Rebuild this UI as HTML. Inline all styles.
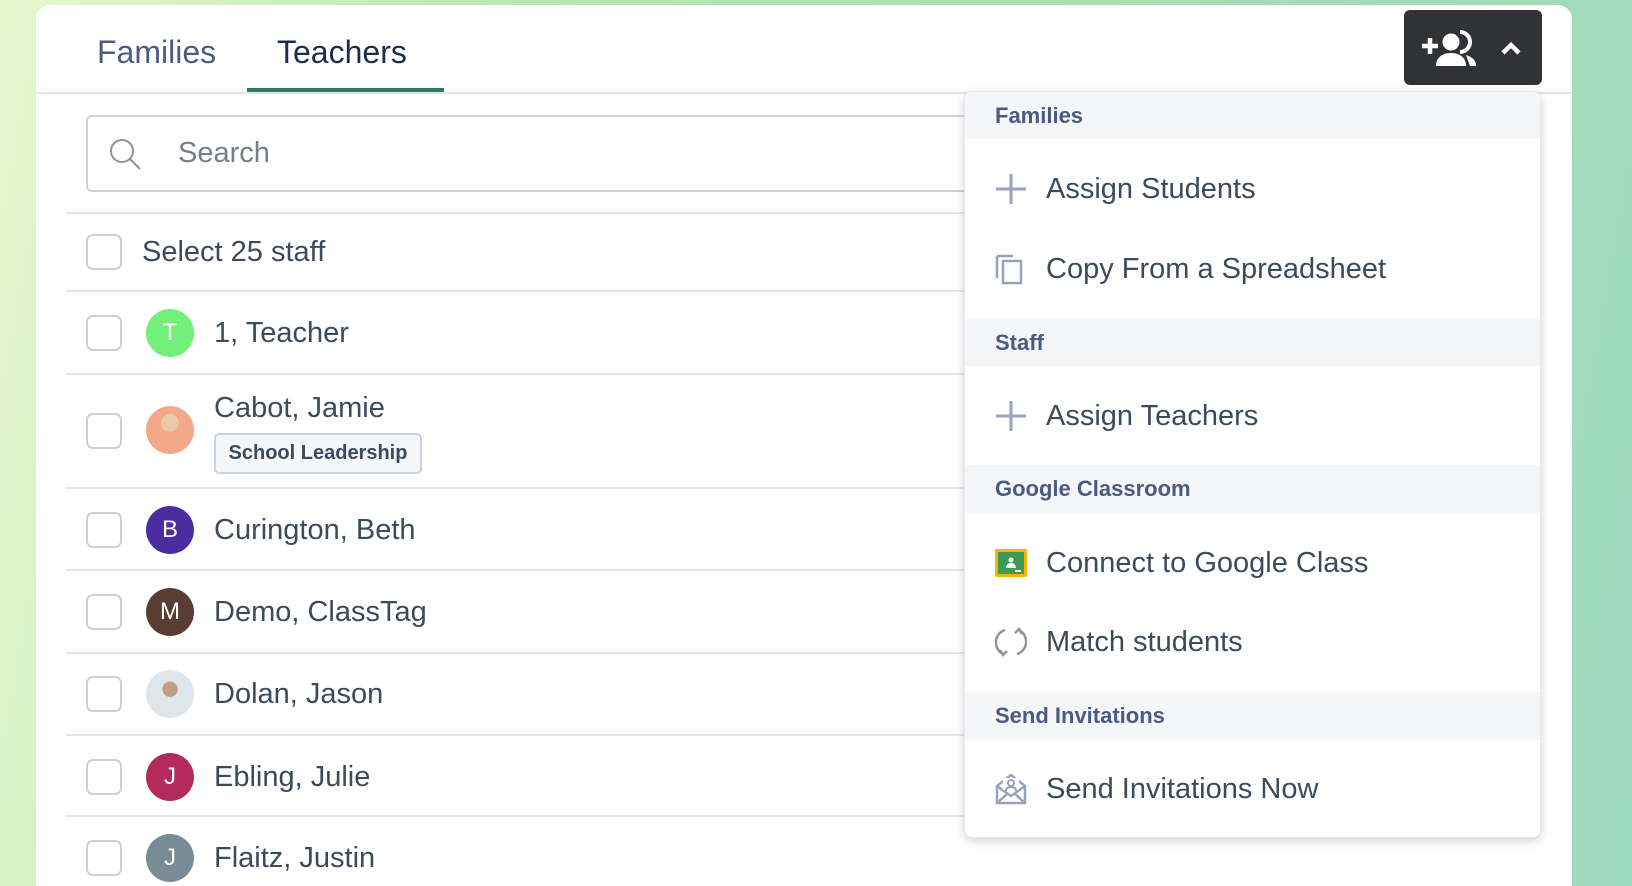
<!DOCTYPE html>
<html style="width:1632px;height:886px;overflow:hidden;background:linear-gradient(100deg,#e6f7cf 0%,#b9e6b2 30%,#a6dcb5 70%,#9fd9bf 100%)"><head><meta charset="utf-8"><style>
*{box-sizing:border-box;margin:0;padding:0}
body{width:1632px;height:886px;overflow:hidden;font-family:"Liberation Sans",sans-serif;background:linear-gradient(100deg,#e6f7cf 0%,#b9e6b2 30%,#a6dcb5 70%,#9fd9bf 100%);position:relative}
.card{position:absolute;left:36px;top:5px;width:1536px;height:881px;background:#fff;border-radius:14px 14px 0 0}
.tab{position:absolute;top:34px;font-size:32px}
.abs{position:absolute}
.line{position:absolute;left:66px;width:900px;height:2px;background:#e3e6ea}
.cb{position:absolute;left:86px;width:36px;height:36px;border:2px solid #c9cfdd;border-radius:7px;background:#fff}
.av{position:absolute;left:146px;width:48px;height:48px;border-radius:50%;color:#fff;font-size:24px;text-align:center;line-height:48px}
.nm{position:absolute;left:214px;font-size:29px;color:#3b4a5c;line-height:36px}
.menu{position:absolute;left:964px;top:91px;width:577px;height:747px;background:#fff;border-radius:8px;box-shadow:0 3px 10px rgba(0,0,0,.18);overflow:hidden;border:1px solid #e6e8ec}
.hd{position:absolute;left:0;width:100%;background:#f5f6f8;color:#4a5a82;font-weight:bold;font-size:22px;padding-left:30px}
.it{position:absolute;left:81px;font-size:29px;color:#3b4a5c;line-height:36px}
.ic{position:absolute;left:30px}
</style></head><body>
<div class="card"></div>
<div class="tab" style="left:97px;color:#4b5b84">Families</div>
<div class="tab" style="left:277px;color:#1e2b4c">Teachers</div>
<div class="abs" style="left:247px;top:88px;width:197px;height:4px;background:#2f7a68"></div>
<div class="abs" style="left:36px;top:92px;width:1536px;height:2px;background:#e3e6ea"></div>
<div class="abs" style="left:1404px;top:10px;width:138px;height:75px;background:#303236;border-radius:6px">
<svg width="138" height="75" viewBox="0 0 138 75"><path d="M18 36h16M26 28v16" stroke="#fff" stroke-width="4.5"/><circle cx="47" cy="32" r="8.5" fill="#fff"/><path d="M32 56c0-9 7-13 15-13s15 4 15 13z" fill="#fff"/><path d="M56 22a10 10 0 0 1 0 20" stroke="#fff" stroke-width="4" fill="none"/><path d="M62 45c6 2 10 5 10 11h-6" fill="#fff"/><path d="M99 43l8-8 8 8" stroke="#fff" stroke-width="4.5" fill="none"/></svg></div>
<div class="abs" style="left:86px;top:115px;width:900px;height:77px;border:2px solid #cbd1df;border-radius:6px"></div>
<svg class="abs" style="left:108px;top:137px" width="36" height="36"><circle cx="14" cy="14" r="11" stroke="#8a93a3" stroke-width="2" fill="none"/><path d="M22 22l10 10" stroke="#8a93a3" stroke-width="2"/></svg>
<div class="abs" style="left:178px;top:137px;font-size:29px;color:#757d8a">Search</div>
<div class="line" style="top:212px"></div>
<div class="cb" style="top:234px"></div><div class="nm" style="left:142px;top:234px">Select 25 staff</div>
<div class="line" style="top:290px"></div>
<div class="cb" style="top:315px"></div><div class="av" style="top:309px;background:#72f07a">T</div><div class="nm" style="top:315px">1, Teacher</div>
<div class="line" style="top:373px"></div>
<div class="cb" style="top:413px"></div><div class="av" style="top:406px;background:radial-gradient(circle at 50% 35%,#e9c9a8 0 22%,#f2a889 23% 100%)"></div><div class="nm" style="top:390px">Cabot, Jamie</div>
<div class="abs" style="left:214px;top:433px;width:208px;height:41px;border:2px solid #cbd1df;border-radius:5px;background:#f5f6f8;font-size:20px;font-weight:bold;color:#3b4a5c;text-align:center;line-height:37px">School Leadership</div>
<div class="line" style="top:487px"></div>
<div class="cb" style="top:512px"></div><div class="av" style="top:506px;background:#4a2d9e">B</div><div class="nm" style="top:512px">Curington, Beth</div>
<div class="line" style="top:569px"></div>
<div class="cb" style="top:594px"></div><div class="av" style="top:588px;background:#5a3c34">M</div><div class="nm" style="top:594px">Demo, ClassTag</div>
<div class="line" style="top:652px"></div>
<div class="cb" style="top:676px"></div><div class="av" style="top:670px;background:radial-gradient(circle at 50% 40%,#c49b85 0 20%,#dfe6ea 21% 100%)"></div><div class="nm" style="top:676px">Dolan, Jason</div>
<div class="line" style="top:734px"></div>
<div class="cb" style="top:759px"></div><div class="av" style="top:753px;background:#b42a5a">J</div><div class="nm" style="top:759px">Ebling, Julie</div>
<div class="line" style="top:815px"></div>
<div class="cb" style="top:840px"></div><div class="av" style="top:834px;background:#7a8b96">J</div><div class="nm" style="top:840px">Flaitz, Justin</div>

<div class="menu">
<div class="hd" style="top:0;height:47px;line-height:47px">Families</div>
<svg class="ic" style="top:81px" width="32" height="32"><path d="M16 1v30M1 16h30" stroke="#9aa1bd" stroke-width="3"/></svg>
<div class="it" style="top:79px">Assign Students</div>
<svg class="ic" style="top:161px" width="30" height="32"><path d="M2 3v22M2 3h16" stroke="#9aa1bd" stroke-width="2.5" fill="none"/><rect x="8" y="8" width="18" height="22" stroke="#9aa1bd" stroke-width="2.5" fill="none"/></svg>
<div class="it" style="top:159px">Copy From a Spreadsheet</div>
<div class="hd" style="top:227px;height:47px;line-height:47px">Staff</div>
<svg class="ic" style="top:308px" width="32" height="32"><path d="M16 1v30M1 16h30" stroke="#9aa1bd" stroke-width="3"/></svg>
<div class="it" style="top:306px">Assign Teachers</div>
<div class="hd" style="top:373px;height:48px;line-height:48px">Google Classroom</div>
<svg class="ic" style="top:457px" width="32" height="28"><rect width="32" height="28" rx="2" fill="#f4b400"/><rect x="3" y="3" width="26" height="22" fill="#3c9a52"/><circle cx="16" cy="11" r="2.5" fill="#fff"/><path d="M11 19c0-3 2-5 5-5s5 2 5 5z" fill="#fff"/><rect x="20" y="21" width="6" height="2" fill="#fff"/></svg>
<div class="it" style="top:453px">Connect to Google Class</div>
<svg class="ic" style="top:534px" width="32" height="32"><path d="M10 4A13 13 0 0 0 8 28M22 28A13 13 0 0 0 24 4" stroke="#8c969c" stroke-width="2.5" fill="none"/><path d="M5 24l3 5 4-4M27 8l-3-5-4 4" stroke="#8c969c" stroke-width="2.5" fill="none"/></svg>
<div class="it" style="top:532px">Match students</div>
<div class="hd" style="top:600px;height:48px;line-height:48px">Send Invitations</div>
<svg class="ic" style="top:681px" width="32" height="32"><path d="M2 13v17h28V13L16 2z" stroke="#9aa1bd" stroke-width="2.5" fill="none" stroke-linejoin="round"/><path d="M2 13l14 10 14-10M2 30l10-9M30 30l-10-9" stroke="#9aa1bd" stroke-width="2.5" fill="none"/><rect x="8" y="5" width="16" height="12" fill="#fff"/><circle cx="16" cy="10" r="3" stroke="#9aa1bd" stroke-width="2" fill="none"/><path d="M11 18c0-3 2-4 5-4s5 1 5 4" stroke="#9aa1bd" stroke-width="2" fill="none"/></svg>
<div class="it" style="top:679px">Send Invitations Now</div>
</div>
</body></html>
